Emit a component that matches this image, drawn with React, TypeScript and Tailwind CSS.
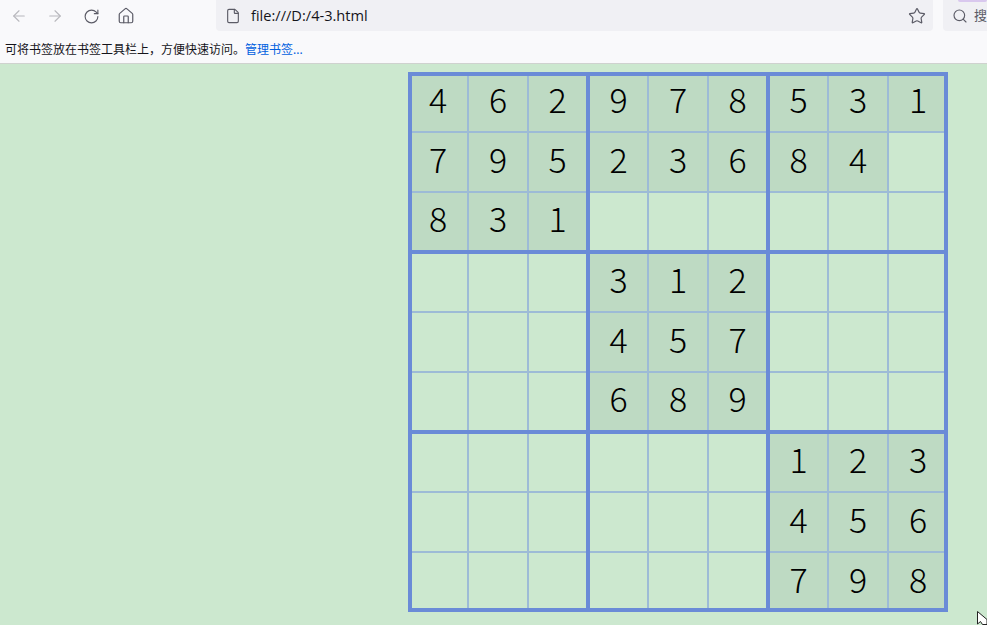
import { ArrowLeft, ArrowRight, RotateCw, Home, File, Star, Search } from 'lucide-react';

const board = [
  ['4', '6', '2', '9', '7', '8', '5', '3', '1'],
  ['7', '9', '5', '2', '3', '6', '8', '4', ''],
  ['8', '3', '1', '', '', '', '', '', ''],
  ['', '', '', '3', '1', '2', '', '', ''],
  ['', '', '', '4', '5', '7', '', '', ''],
  ['', '', '', '6', '8', '9', '', '', ''],
  ['', '', '', '', '', '', '1', '2', '3'],
  ['', '', '', '', '', '', '4', '5', '6'],
  ['', '', '', '', '', '', '7', '9', '8'],
];

const Cell = ({ value, row, col }: { value: string; row: number; col: number }) => (
  <td
    className={`p-0 text-center align-middle font-['Noto_Sans_CJK_SC',sans-serif] text-[34px] font-light leading-none text-black border-2 border-[#9dbbd6] ${value ? 'bg-[#bedac3]' : ''} ${col === 0 ? 'w-[58px] pr-[3px]' : col === 8 ? 'w-[58px] pl-[3px]' : 'w-[60px]'} ${row === 0 ? 'h-[58px] pb-[9px]' : row === 8 ? 'h-[58px] pb-[4px]' : 'h-[60px] pb-[7px]'} ${col % 3 === 0 ? 'border-l-4 border-l-[#6a8bd7]' : ''} ${col === 8 ? 'border-r-4 border-r-[#6a8bd7]' : ''} ${row % 3 === 0 ? 'border-t-4 border-t-[#6a8bd7]' : ''} ${row === 8 ? 'border-b-4 border-b-[#6a8bd7]' : ''}`}
  >
    {value}
  </td>
);

export default function App() {
  return (
    <div className="relative h-[625px] w-[987px] overflow-hidden bg-[#cce8cf] font-['Noto_Sans','Noto_Sans_CJK_SC',sans-serif]">
      <header className="h-[64px] border-b border-[#cfd2cf] bg-[#f9f9fb]">
        <div className="flex h-[32px] items-center">
          <div className="flex w-[216px] items-center pl-[10px] text-[#b8b8bd]">
            <ArrowLeft size={18} strokeWidth={1.5} />
            <ArrowRight size={18} strokeWidth={1.5} className="ml-[18px]" />
            <RotateCw size={17} strokeWidth={1.6} className="ml-[19px] text-[#5b5b66]" />
            <Home size={18} strokeWidth={1.6} className="ml-[17px] text-[#5b5b66]" />
          </div>
          <div className="flex h-[31px] w-[717px] items-center self-start rounded-b-[4px] bg-[#f0f0f4] pl-[9px] pr-[7px]">
            <File size={16} strokeWidth={1.7} className="text-[#5b5b66]" />
            <span className="ml-[10px] font-['Open_Sans',sans-serif] text-[14.6px] text-[#15141a]">file:///D:/4-3.html</span>
            <Star size={18} strokeWidth={1.6} className="ml-auto text-[#5b5b66]" />
          </div>
          <div className="relative ml-[10px] flex h-[31px] flex-1 items-center self-start rounded-bl-[4px] bg-[#f0f0f4] pl-[9px]">
            <div className="absolute right-0 top-0 h-[2px] w-[29px] rounded-b-[3px] bg-[#d9c8ee]" />
            <Search size={16} strokeWidth={1.7} className="text-[#5b5b66]" />
            <span className="ml-[6px] whitespace-nowrap text-[13px] text-[#5b5b66]">搜</span>
          </div>
        </div>
        <div className="flex h-[35px] items-center pl-[5px] text-[12px] text-[#15141a]">
          <span>可将书签放在书签工具栏上，方便快速访问。</span>
          <span className="text-[#0060df]">管理书签...</span>
        </div>
      </header>
      <main className="pl-[408px] pt-[8px]">
        <table className="table-fixed border-collapse">
          <tbody>
            {board.map((cells, row) => (
              <tr key={row}>
                {cells.map((value, col) => (
                  <Cell key={col} value={value} row={row} col={col} />
                ))}
              </tr>
            ))}
          </tbody>
        </table>
      </main>
      <svg className="absolute left-[977px] top-[611px]" width="10" height="14" viewBox="0 0 10 14">
        <path d="M0.5 0.5V13L3.5 10.5L5.5 13.5L10 13.5V8.5Z" fill="#fff" stroke="#222" strokeWidth="1" />
      </svg>
    </div>
  );
}
